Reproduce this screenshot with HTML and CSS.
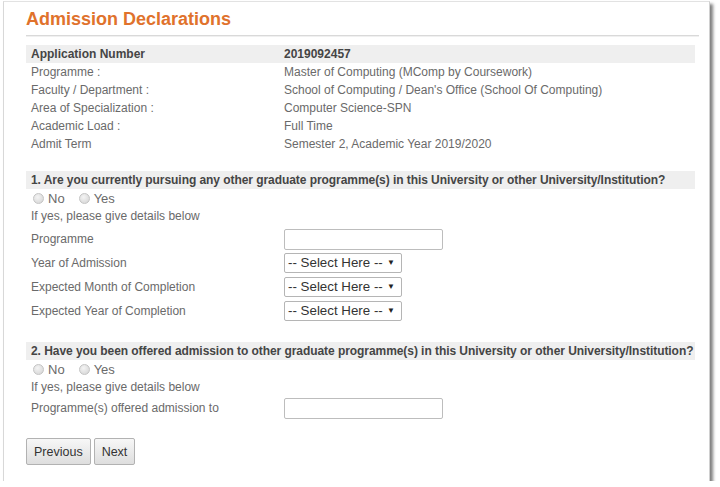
FILE: index.html
```html
<!DOCTYPE html>
<html>
<head>
<meta charset="utf-8">
<title>Admission Declarations</title>
<link rel="stylesheet" href="styles.css">
</head>
<body>
<div class="frame">
  <h1 class="title">Admission Declarations</h1>
  <div class="rule"></div>

  <div class="info">
    <div class="row band"><span class="lbl">Application Number</span><span class="val">2019092457</span></div>
    <div class="row"><span class="lbl">Programme :</span><span class="val">Master of Computing (MComp by Coursework)</span></div>
    <div class="row"><span class="lbl">Faculty / Department :</span><span class="val">School of Computing / Dean's Office (School Of Computing)</span></div>
    <div class="row"><span class="lbl">Area of Specialization :</span><span class="val">Computer Science-SPN</span></div>
    <div class="row"><span class="lbl">Academic Load :</span><span class="val">Full Time</span></div>
    <div class="row"><span class="lbl">Admit Term</span><span class="val">Semester 2, Academic Year 2019/2020</span></div>
  </div>

  <div class="question q1">
    <div class="band qtext">1. Are you currently pursuing any other graduate programme(s) in this University or other University/Institution?</div>
    <div class="radios">
      <label class="radio"><input type="radio" name="q1"><span>No</span></label>
      <label class="radio"><input type="radio" name="q1"><span>Yes</span></label>
    </div>
    <div class="hint">If yes, please give details below</div>
    <div class="field first"><span class="lbl">Programme</span><input class="text" type="text"></div>
    <div class="field"><span class="lbl">Year of Admission</span><span class="select"><select><option>-- Select Here --</option></select><span class="arrow">&#9660;</span></span></div>
    <div class="field"><span class="lbl">Expected Month of Completion</span><span class="select"><select><option>-- Select Here --</option></select><span class="arrow">&#9660;</span></span></div>
    <div class="field"><span class="lbl">Expected Year of Completion</span><span class="select"><select><option>-- Select Here --</option></select><span class="arrow">&#9660;</span></span></div>
  </div>

  <div class="question q2">
    <div class="band qtext">2. Have you been offered admission to other graduate programme(s) in this University or other University/Institution?</div>
    <div class="radios">
      <label class="radio"><input type="radio" name="q2"><span>No</span></label>
      <label class="radio"><input type="radio" name="q2"><span>Yes</span></label>
    </div>
    <div class="hint">If yes, please give details below</div>
    <div class="field"><span class="lbl">Programme(s) offered admission to</span><input class="text" type="text"></div>
  </div>

  <div class="buttons">
    <button class="btn" type="button">Previous</button>
    <button class="btn" type="button">Next</button>
  </div>
</div>
</body>
</html>
```
FILE: styles.css
```css
html, body {
  margin: 0;
  padding: 0;
  background: #ffffff;
}
body {
  font-family: "Liberation Sans", Arial, sans-serif;
  font-size: 12px;
  color: #6a6a6a;
}
.frame {
  margin: 1px 0 0 3px;
  width: 707px;
  height: 480px;
  box-sizing: border-box;
  padding: 0 10px 0 22px;
  border-top: 1px solid #e2e2e2;
  border-left: 1px solid #d8d8d8;
  border-right: 1px solid #d0d0d0;
  box-shadow: 3px 3px 3px rgba(0, 0, 0, 0.5);
  background: #fff;
}
.title {
  margin: 0;
  padding-top: 5px;
  height: 28px;
  line-height: 24px;
  font-size: 18px;
  font-weight: bold;
  color: #e0722c;
}
.rule {
  height: 1px;
  background: #d9d9d9;
  box-shadow: 0 1px 0 #f0f0f0;
}
.info {
  margin-top: 9px;
  margin-right: 4px;
}
.row {
  display: grid;
  grid-template-columns: 258px 1fr;
  height: 18px;
  line-height: 18px;
}
.lbl {
  padding-left: 5px;
}
.band {
  background: #efefef;
  font-weight: bold;
  color: #454545;
}
.question {
  margin-right: 4px;
}
.q1 {
  margin-top: 18px;
}
.q2 {
  margin-top: 19px;
}
.qtext {
  height: 18px;
  line-height: 18px;
  padding-left: 5px;
  white-space: nowrap;
  letter-spacing: -0.06px;
}
.radios {
  display: flex;
  gap: 14px;
  height: 18px;
  align-items: center;
  padding-left: 7px;
}
.radio {
  display: inline-flex;
  align-items: center;
  gap: 4px;
  font-size: 13px;
  color: #6a6a6a;
}
.radio input {
  appearance: none;
  -webkit-appearance: none;
  margin: 0;
  width: 11px;
  height: 11px;
  border-radius: 50%;
  border: 1px solid #c4c4c4;
  background: radial-gradient(circle at 40% 35%, #f4f4f4, #d2d2d2);
  box-sizing: border-box;
}
.hint {
  height: 18px;
  line-height: 18px;
  padding-left: 5px;
}
.field {
  display: grid;
  grid-template-columns: 258px auto;
  align-items: center;
  height: 24px;
  justify-items: start;
}
.field.first {
  margin-top: 2px;
}
.text {
  width: 159px;
  height: 21px;
  box-sizing: border-box;
  border: 1px solid #bdbdbd;
  border-radius: 2px;
  margin: 0;
  padding: 0 3px;
  background: #fff;
}
.select {
  display: inline-flex;
  align-items: center;
  width: 118px;
  height: 20px;
  box-sizing: border-box;
  border: 1px solid #b5b5b5;
  border-radius: 2px;
  background: #fff;
}
.select select {
  appearance: none;
  -webkit-appearance: none;
  border: 0;
  background: transparent;
  font-family: "Liberation Sans", Arial, sans-serif;
  font-size: 13.33px;
  color: #333;
  padding: 0 0 0 3px;
  margin: 0;
  width: 102px;
  height: 18px;
  line-height: 18px;
  outline: none;
}
.arrow {
  font-size: 8px;
  color: #222;
  line-height: 1;
}
.buttons {
  display: flex;
  gap: 3px;
  margin-top: 18px;
}
.btn {
  height: 27px;
  box-sizing: border-box;
  border: 1px solid #b2b2b2;
  border-radius: 2px;
  background: linear-gradient(#f7f7f7, #dedede);
  font-family: "Liberation Sans", Arial, sans-serif;
  font-size: 12.5px;
  color: #333;
  padding: 0 7px;
  margin: 0;
}
```
